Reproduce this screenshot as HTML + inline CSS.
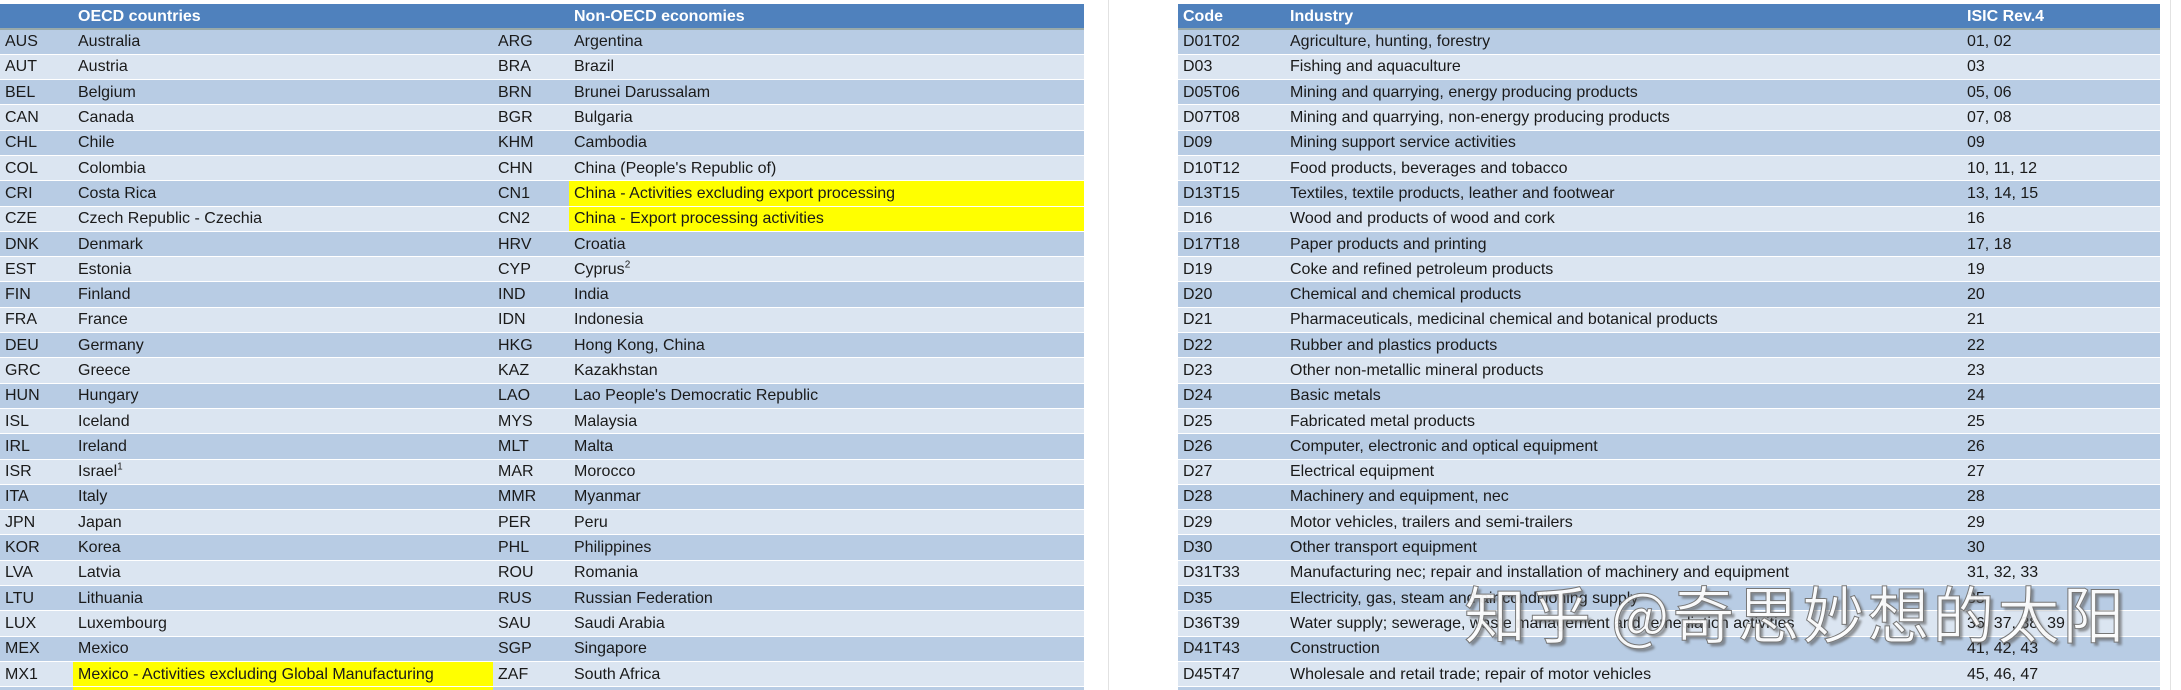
<!DOCTYPE html>
<html><head><meta charset="utf-8"><style>
html,body{margin:0;padding:0;width:2181px;height:690px;overflow:hidden;background:#fff;position:relative;font-family:"Liberation Sans",sans-serif;}
.t{position:absolute;top:4px;border-collapse:collapse;table-layout:fixed;}
.t td{height:24.3px;padding:1px 0 0 5px;box-sizing:border-box;font-size:16px;color:#1a1a1a;white-space:nowrap;overflow:hidden;border-bottom:1px solid #fff;line-height:22px;}
.t tr{height:25.3px;}
.t tr.h{height:25px;}
.t tr.h td{background:#4f81bd;color:#fff;font-weight:bold;height:25px;border-bottom:2px solid #9aa;line-height:22px;padding-top:2px;}
.t tr:nth-child(even) td{background:#b8cce4;}
.t tr:nth-child(odd):not(.h) td{background:#dbe5f1;}
.t td.y{background:#ffff00 !important;}
sup{font-size:10px;line-height:0;}
.g{position:absolute;top:0;width:1px;background:#e2e2e2;}
.wm{position:absolute;left:1464px;top:566px;font-family:"Noto Sans CJK SC",sans-serif;font-size:62px;color:rgba(255,255,255,0.92);-webkit-text-stroke:1px #777;text-shadow:3px 3px 2px rgba(90,90,90,0.6);white-space:nowrap;letter-spacing:3px;}
</style></head><body>
<div class="g" style="left:1108px;height:690px"></div>
<div class="g" style="left:2170px;height:690px"></div>
<table class="t" style="left:0;width:1084px">
<colgroup><col style="width:73px"><col style="width:420px"><col style="width:76px"><col style="width:515px"></colgroup>
<tr class="h"><td></td><td>OECD countries</td><td></td><td>Non-OECD economies</td></tr>
<tr><td>AUS</td><td>Australia</td><td>ARG</td><td>Argentina</td></tr>
<tr><td>AUT</td><td>Austria</td><td>BRA</td><td>Brazil</td></tr>
<tr><td>BEL</td><td>Belgium</td><td>BRN</td><td>Brunei Darussalam</td></tr>
<tr><td>CAN</td><td>Canada</td><td>BGR</td><td>Bulgaria</td></tr>
<tr><td>CHL</td><td>Chile</td><td>KHM</td><td>Cambodia</td></tr>
<tr><td>COL</td><td>Colombia</td><td>CHN</td><td>China (People's Republic of)</td></tr>
<tr><td>CRI</td><td>Costa Rica</td><td>CN1</td><td class="y">China - Activities excluding export processing</td></tr>
<tr><td>CZE</td><td>Czech Republic - Czechia</td><td>CN2</td><td class="y">China - Export processing activities</td></tr>
<tr><td>DNK</td><td>Denmark</td><td>HRV</td><td>Croatia</td></tr>
<tr><td>EST</td><td>Estonia</td><td>CYP</td><td>Cyprus<sup>2</sup></td></tr>
<tr><td>FIN</td><td>Finland</td><td>IND</td><td>India</td></tr>
<tr><td>FRA</td><td>France</td><td>IDN</td><td>Indonesia</td></tr>
<tr><td>DEU</td><td>Germany</td><td>HKG</td><td>Hong Kong, China</td></tr>
<tr><td>GRC</td><td>Greece</td><td>KAZ</td><td>Kazakhstan</td></tr>
<tr><td>HUN</td><td>Hungary</td><td>LAO</td><td>Lao People's Democratic Republic</td></tr>
<tr><td>ISL</td><td>Iceland</td><td>MYS</td><td>Malaysia</td></tr>
<tr><td>IRL</td><td>Ireland</td><td>MLT</td><td>Malta</td></tr>
<tr><td>ISR</td><td>Israel<sup>1</sup></td><td>MAR</td><td>Morocco</td></tr>
<tr><td>ITA</td><td>Italy</td><td>MMR</td><td>Myanmar</td></tr>
<tr><td>JPN</td><td>Japan</td><td>PER</td><td>Peru</td></tr>
<tr><td>KOR</td><td>Korea</td><td>PHL</td><td>Philippines</td></tr>
<tr><td>LVA</td><td>Latvia</td><td>ROU</td><td>Romania</td></tr>
<tr><td>LTU</td><td>Lithuania</td><td>RUS</td><td>Russian Federation</td></tr>
<tr><td>LUX</td><td>Luxembourg</td><td>SAU</td><td>Saudi Arabia</td></tr>
<tr><td>MEX</td><td>Mexico</td><td>SGP</td><td>Singapore</td></tr>
<tr><td>MX1</td><td class="y">Mexico - Activities excluding Global Manufacturing</td><td>ZAF</td><td>South Africa</td></tr>
<tr><td></td><td class="y"></td><td></td><td></td></tr>
</table>
<table class="t" style="left:1178px;width:982px">
<colgroup><col style="width:107px"><col style="width:677px"><col style="width:198px"></colgroup>
<tr class="h"><td>Code</td><td>Industry</td><td>ISIC Rev.4</td></tr>
<tr><td>D01T02</td><td>Agriculture, hunting, forestry</td><td>01, 02</td></tr>
<tr><td>D03</td><td>Fishing and aquaculture</td><td>03</td></tr>
<tr><td>D05T06</td><td>Mining and quarrying, energy producing products</td><td>05, 06</td></tr>
<tr><td>D07T08</td><td>Mining and quarrying, non-energy producing products</td><td>07, 08</td></tr>
<tr><td>D09</td><td>Mining support service activities</td><td>09</td></tr>
<tr><td>D10T12</td><td>Food products, beverages and tobacco</td><td>10, 11, 12</td></tr>
<tr><td>D13T15</td><td>Textiles, textile products, leather and footwear</td><td>13, 14, 15</td></tr>
<tr><td>D16</td><td>Wood and products of wood and cork</td><td>16</td></tr>
<tr><td>D17T18</td><td>Paper products and printing</td><td>17, 18</td></tr>
<tr><td>D19</td><td>Coke and refined petroleum products</td><td>19</td></tr>
<tr><td>D20</td><td>Chemical and chemical products</td><td>20</td></tr>
<tr><td>D21</td><td>Pharmaceuticals, medicinal chemical and botanical products</td><td>21</td></tr>
<tr><td>D22</td><td>Rubber and plastics products</td><td>22</td></tr>
<tr><td>D23</td><td>Other non-metallic mineral products</td><td>23</td></tr>
<tr><td>D24</td><td>Basic metals</td><td>24</td></tr>
<tr><td>D25</td><td>Fabricated metal products</td><td>25</td></tr>
<tr><td>D26</td><td>Computer, electronic and optical equipment</td><td>26</td></tr>
<tr><td>D27</td><td>Electrical equipment</td><td>27</td></tr>
<tr><td>D28</td><td>Machinery and equipment, nec</td><td>28</td></tr>
<tr><td>D29</td><td>Motor vehicles, trailers and semi-trailers</td><td>29</td></tr>
<tr><td>D30</td><td>Other transport equipment</td><td>30</td></tr>
<tr><td>D31T33</td><td>Manufacturing nec; repair and installation of machinery and equipment</td><td>31, 32, 33</td></tr>
<tr><td>D35</td><td>Electricity, gas, steam and air conditioning supply</td><td>35</td></tr>
<tr><td>D36T39</td><td>Water supply; sewerage, waste management and remediation activities</td><td>36, 37, 38, 39</td></tr>
<tr><td>D41T43</td><td>Construction</td><td>41, 42, 43</td></tr>
<tr><td>D45T47</td><td>Wholesale and retail trade; repair of motor vehicles</td><td>45, 46, 47</td></tr>
<tr><td></td><td></td><td></td></tr>
</table>
<div class="wm">知乎 @奇思妙想的太阳</div>
</body></html>
